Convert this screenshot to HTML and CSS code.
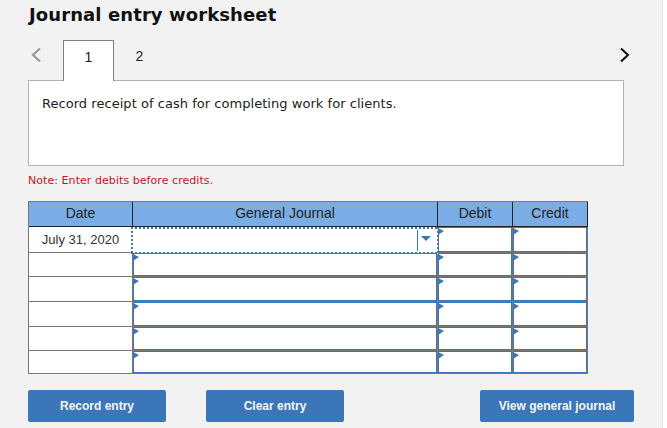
FILE: index.html
```html
<!DOCTYPE html>
<html lang="en">
<head>
<meta charset="utf-8">
<title>Journal entry worksheet</title>
<link rel="stylesheet" href="styles.css">
</head>
<body>
<main class="page">
  <h1 class="title">Journal entry worksheet</h1>
  <nav class="tabs">
    <svg class="arrow" width="12" height="16" viewBox="0 0 12 16"><path d="M10 1.5 3 8l7 6.5" fill="none" stroke="#999" stroke-width="2.2"/></svg>
    <div class="tab active">1</div>
    <div class="tab">2</div>
    <svg class="arrow next" width="12" height="16" viewBox="0 0 12 16"><path d="M2 1.5 9 8l-7 6.5" fill="none" stroke="#111" stroke-width="2"/></svg>
  </nav>
  <section class="prompt">Record receipt of cash for completing work for clients.</section>
  <p class="note">Note: Enter debits before credits.</p>
  <div class="sheet">
    <div class="head">Date</div><div class="head">General Journal</div><div class="head">Debit</div><div class="head">Credit</div>

    <div class="date">July 31, 2020</div>
    <div class="entry focus"><span class="drop"><i></i></span></div>
    <div class="entry flag"></div><div class="entry flag"></div>

    <div class="date"></div><div class="entry flag"></div><div class="entry flag"></div><div class="entry flag"></div>
    <div class="date"></div><div class="entry flag"></div><div class="entry flag"></div><div class="entry flag"></div>
    <div class="date"></div><div class="entry flag"></div><div class="entry flag"></div><div class="entry flag"></div>
    <div class="date"></div><div class="entry flag"></div><div class="entry flag"></div><div class="entry flag"></div>
    <div class="date"></div><div class="entry flag"></div><div class="entry flag"></div><div class="entry flag"></div>
  </div>
  <div class="actions">
    <button class="btn">Record entry</button>
    <button class="btn">Clear entry</button>
    <button class="btn wide">View general journal</button>
  </div>
</main>
</body>
</html>
```
FILE: styles.css
```css
* { box-sizing: border-box; }
html, body { margin: 0; height: 100%; background: #fff; }
body { overflow: hidden; }
.page {
  width: 663px;
  height: 428px;
  background: #f2f2f2;
  border-right: 1px solid #e4e4e4;
  padding: 4px 0 0 28px;
}
.title {
  margin: 0;
  height: 36px;
  font: bold 18px/22px "DejaVu Sans", sans-serif;
  letter-spacing: 0.1px;
  color: #111;
  padding-left: 1px;
}
.tabs {
  display: flex;
  align-items: stretch;
  height: 41px;
  width: 603px;
  position: relative;
  z-index: 1;
}
.arrow { margin: 7px 21px 0 2px; flex: none; }
.arrow.next { margin: 7px 0 0 auto; }
.tab {
  width: 51px;
  padding-top: 8px;
  text-align: center;
  font: 14px/16px "Liberation Sans", sans-serif;
  color: #222;
}
.tab.active {
  background: #fff;
  border: 1px solid #808080;
  border-bottom: 0;
}
.prompt {
  width: 596px;
  height: 86px;
  margin-top: -1px;
  padding: 14px 13px;
  background: #fff;
  border: 1px solid #b3b3b3;
  font: 13px/17px "DejaVu Sans", sans-serif;
  letter-spacing: 0.04px;
  color: #222;
}
.note {
  margin: 8px 0 0;
  height: 27px;
  font: 11px/14px "DejaVu Sans", sans-serif;
  letter-spacing: 0.06px;
  color: #c4161c;
}
.sheet {
  display: grid;
  width: 560px;
  grid-template-columns: 104px 305px 75px 75px;
  grid-template-rows: 25px 26px 24px 25px 25px 24px 23px;
  background: #777;
  border-top: 1px solid #777;
  border-left: 1px solid #777;
}
.head {
  background: #7aade6;
  border-right: 1px solid #222;
  border-bottom: 1px solid #222;
  font: 14px/23px "Liberation Sans", sans-serif;
  text-align: center;
  color: #222;
}
.date {
  background: #fff;
  border-bottom: 1px solid #777;
  border-right: 1px solid #777;
  font: 13px/25px "Liberation Sans", sans-serif;
  text-align: center;
  color: #333;
}
.entry {
  position: relative;
  margin: 0 1px 1px 0;
  background: #fff;
  border: 1px solid #3b76b8;
}
.flag::before {
  content: "";
  position: absolute;
  left: -1px;
  top: 0;
  border-left: 6px solid #3b76b8;
  border-top: 3px solid transparent;
  border-bottom: 4px solid transparent;
}
.focus {
  margin: 0 -1px -1px -2px;
  border: 0;
  background:
    repeating-linear-gradient(90deg, #3b76b8 0 2px, transparent 2px 4px) top / 100% 2px no-repeat,
    repeating-linear-gradient(90deg, #3b76b8 0 2px, transparent 2px 4px) bottom / 100% 2px no-repeat,
    repeating-linear-gradient(180deg, #3b76b8 0 2px, transparent 2px 4px) left / 2px 100% no-repeat,
    repeating-linear-gradient(180deg, #3b76b8 0 2px, transparent 2px 4px) right / 2px 100% no-repeat,
    #fff;
}
.drop {
  position: absolute;
  right: 3px;
  top: 3px;
  bottom: 3px;
  width: 19px;
  border-left: 1px solid #3b76b8;
}
.drop i {
  position: absolute;
  left: 3px;
  top: 6px;
  border-top: 5px solid #3b76b8;
  border-left: 5px solid transparent;
  border-right: 5px solid transparent;
}
.actions {
  display: flex;
  width: 606px;
  margin-top: 16px;
  gap: 40px;
}
.btn {
  width: 138px;
  height: 32px;
  padding: 0;
  border: 0;
  border-radius: 2px;
  background: #3b76b8;
  color: #f2f6fb;
  font: bold 12px/32px "Liberation Sans", sans-serif;
}
.btn.wide { width: 154px; margin-left: auto; }
```
